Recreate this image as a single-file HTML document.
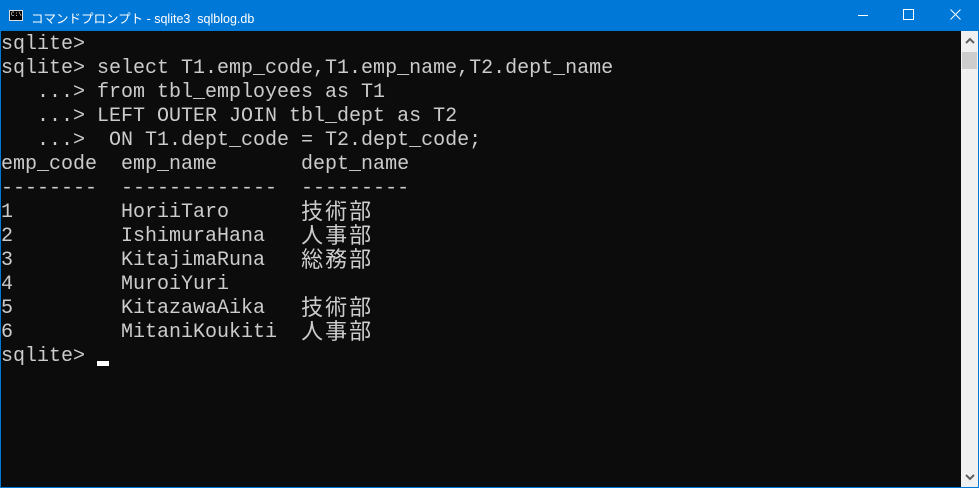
<!DOCTYPE html>
<html><head><meta charset="utf-8"><style>
html,body{margin:0;padding:0;}
body{width:979px;height:488px;position:relative;overflow:hidden;background:#0078d7;font-family:"Liberation Sans","Noto Sans CJK JP",sans-serif;}
.title{position:absolute;left:0;top:0;width:979px;height:31px;background:#0078d7;color:#fff;}
.title .t{position:absolute;left:31px;top:8px;font-size:12.5px;}
.icon{position:absolute;left:9px;top:10px;width:14px;height:11px;background:#000;border:1px solid #ddd;box-sizing:border-box;}
.icon span{position:absolute;left:1px;top:1px;color:#fff;font-size:6px;line-height:6px;font-family:"Liberation Mono",monospace;}
.con{position:absolute;left:1px;top:31px;width:960px;height:456px;background:#0c0c0c;}
.sb{position:absolute;left:961px;top:31px;width:17px;height:456px;background:#f0f0f0;}
.thumb{position:absolute;left:1px;top:21px;width:15px;height:17px;background:#cdcdcd;}
pre{margin:0;position:absolute;left:0;top:2px;color:#cccccc;font-family:"Liberation Mono","Noto Sans CJK JP",monospace;font-size:20px;line-height:24px;}
.j{display:inline-block;width:24px;height:24px;font-family:"Noto Sans CJK JP",sans-serif;font-size:22px;line-height:24px;vertical-align:top;position:relative;top:-3px;}
.cur{position:absolute;left:96px;top:330px;width:12px;height:5px;background:#fff;}
</style></head><body>
<div class="title"><div class="icon"><span>C:\</span></div><div class="t">コマンドプロンプト - sqlite3&nbsp; sqlblog.db</div>
<svg style="position:absolute;left:858px;top:10px" width="12" height="12"><line x1="0" y1="5.5" x2="10" y2="5.5" stroke="#fff"/></svg>
<svg style="position:absolute;left:903px;top:9px" width="12" height="12"><rect x="0.5" y="0.5" width="10" height="10" fill="none" stroke="#fff"/></svg>
<svg style="position:absolute;left:950px;top:9px" width="12" height="12"><path d="M0.5 0.5L10.5 10.5M10.5 0.5L0.5 10.5" stroke="#fff"/></svg>
</div>
<div class="con">
<pre>sqlite&gt;
sqlite&gt; select T1.emp_code,T1.emp_name,T2.dept_name
   ...&gt; from tbl_employees as T1
   ...&gt; LEFT OUTER JOIN tbl_dept as T2
   ...&gt;  ON T1.dept_code = T2.dept_code;
emp_code  emp_name       dept_name
--------  -------------  ---------
1         HoriiTaro      <span class="j">技</span><span class="j">術</span><span class="j">部</span>
2         IshimuraHana   <span class="j">人</span><span class="j">事</span><span class="j">部</span>
3         KitajimaRuna   <span class="j">総</span><span class="j">務</span><span class="j">部</span>
4         MuroiYuri
5         KitazawaAika   <span class="j">技</span><span class="j">術</span><span class="j">部</span>
6         MitaniKoukiti  <span class="j">人</span><span class="j">事</span><span class="j">部</span>
sqlite&gt; </pre>
<div class="cur"></div>
</div>
<div class="sb"><div class="thumb"></div>
<svg style="position:absolute;left:4px;top:6px" width="10" height="8"><path d="M1 6L5 2L9 6" stroke="#606060" stroke-width="2" fill="none"/></svg>
<svg style="position:absolute;left:4px;top:442px" width="10" height="8"><path d="M1 2L5 6L9 2" stroke="#606060" stroke-width="2" fill="none"/></svg>
</div>
</body></html>
